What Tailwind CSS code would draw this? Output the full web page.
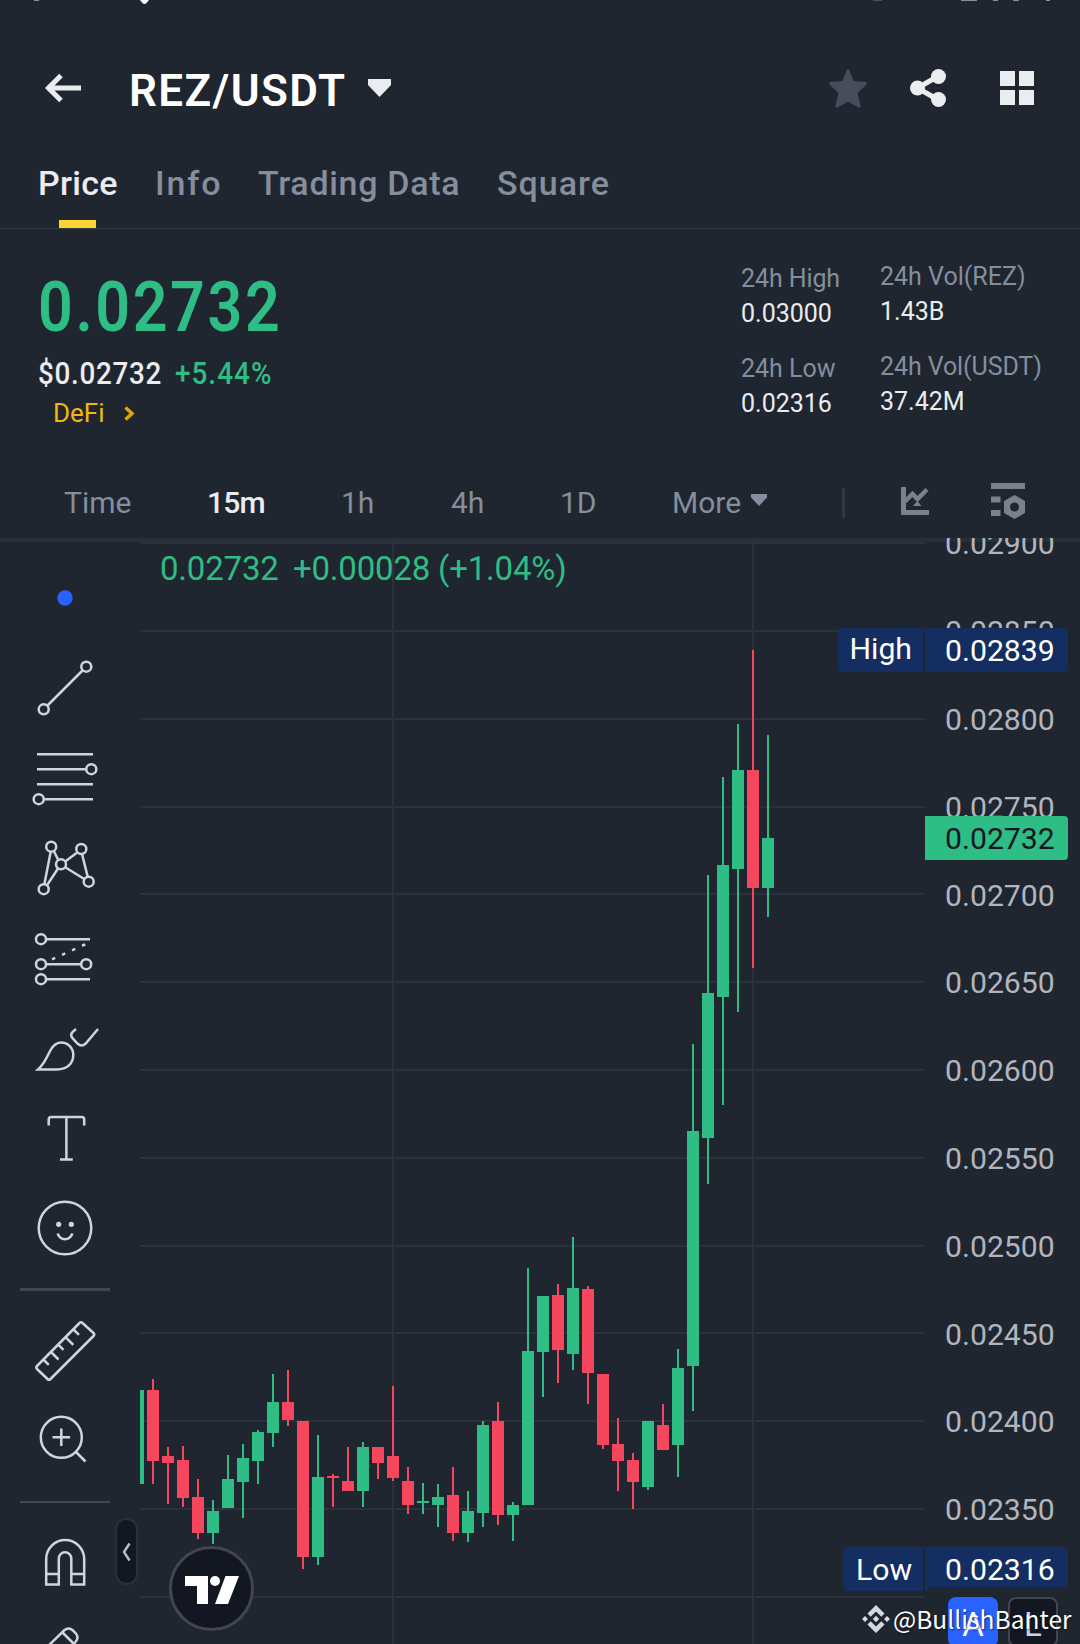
<!DOCTYPE html>
<html lang="en">
<head>
  <meta charset="UTF-8" />
  <meta name="viewport" content="width=device-width, initial-scale=1" />
  <title>REZ/USDT</title>
  <script src="https://cdn.jsdelivr.net/npm/@tailwindcss/browser@4"></script>
</head>
<body class="bg-[#202630] font-['Roboto',sans-serif] text-[#eaecef]">
<div class="relative w-[1080px] h-[1644px] overflow-hidden bg-[#202630]">

  <!-- Status bar remains -->
  <svg class="absolute top-0 left-0" width="1080" height="5" fill="#8b9098">
    <rect x="34" width="5" height="1" />
    <path d="M140 0h9l-2.500 3q-2 2-4 0z" fill="#fff" />
    <rect x="873" width="9" height="1" opacity=".4" />
    <rect x="961" width="16" height="1" />
    <rect x="993" width="5" height="1" />
    <rect x="1013" width="6" height="1" />
    <rect x="1046" width="4" height="1" />
  </svg>

  <!-- Header -->
  <header class="h-[120px] pt-14 pl-11 pr-[46px] flex items-center">
    <svg width="38" height="30" viewBox="0 0 38 30" fill="none" stroke="#eaecef" stroke-width="5">
      <path d="M3 15h34M17 2.500L4.500 15 17 27.500" />
    </svg>
    <h1 class="ml-[47px] pt-1.5 w-[221px] whitespace-nowrap text-[44px] leading-[56px] font-semibold text-white tracking-[1.4px]">REZ/USDT</h1>
    <svg class="ml-[18px]" width="23" height="18" viewBox="0 0 23 18" fill="#eaecef"><path d="M0 0h23v6L11.500 18 0 6z" /></svg>
    <div class="ml-auto flex items-center">
      <svg width="38" height="40" viewBox="0 0 38 40" fill="#474d5c" stroke="#474d5c" stroke-width="3" stroke-linejoin="round">
        <path d="M19 3l4.500 11.500 13 1-9.500 9 3 13.500-11-6-11 6 3-13.500-9.500-9 13-1z" />
      </svg>
      <svg class="ml-[43px]" width="37" height="40" viewBox="0 0 37 40" fill="#eaecef">
        <path d="M7.500 20L28.500 8M7.500 20l21 12" stroke="#eaecef" stroke-width="5" />
        <circle cx="7.500" cy="20" r="7.500" /><circle cx="28.500" cy="8.500" r="7.500" /><circle cx="28.500" cy="31.500" r="7.500" />
      </svg>
      <svg class="ml-[53px]" width="34" height="34" viewBox="0 0 34 34" fill="#eaecef">
        <path d="M0 0h15v15H0zM19 0h15v15H19zM0 19h15v15H0zM19 19h15v15H19z" />
      </svg>
    </div>
  </header>

  <!-- Tabs -->
  <nav class="h-[109px] pl-[38px] flex gap-[37px] border-b border-[#2f3941] text-[34px] leading-[40px] font-medium text-[#848e9c]">
    <a class="relative pt-[43px] w-[80px] tracking-[0.3px] text-[#eaecef]">Price<span class="absolute bottom-0 left-[21px] w-[37px] h-2 bg-[#fcd535]"></span></a>
    <a class="pt-[43px] w-[66px] tracking-[1.9px]">Info</a>
    <a class="pt-[43px] w-[202px] whitespace-nowrap tracking-[0.7px]">Trading Data</a>
    <a class="pt-[43px] tracking-[1px]">Square</a>
  </nav>

  <!-- Price summary -->
  <section class="h-[238px] flex">
    <div class="w-[740px] pt-[38px] pl-[38px]">
      <p class="text-[70px] leading-[80px] font-semibold text-[#2ebd85] tracking-[3px] scale-x-87 origin-left">0.02732</p>
      <p class="mt-1.5 text-[32px] leading-[40px] flex font-medium">
        <span class="w-[137px]"><span class="inline-block scale-x-87 origin-left tracking-[0.8px]">$0.02732</span></span>
        <span class="inline-block scale-x-87 origin-left tracking-[1.200px] text-[#2ebd85]">+5.44%</span>
      </p>
      <p class="pl-[15px] text-[26px] leading-[40px] flex items-center text-[#f0b90b]">
        <span class="w-[71px] tracking-[0px]">DeFi</span>
        <svg width="11" height="15" viewBox="0 0 11 15" fill="none" stroke="#d9a70c" stroke-width="3.500"><path d="M1.500 1.500l6.500 6-6.500 6" /></svg>
      </p>
    </div>
    <div class="w-[139px] pt-[33px] pl-px text-[25px] leading-[34px]">
      <p class="text-[#848e9c] tracking-[-0.1px]">24h High</p>
      <p class="pt-px">0.03000</p>
      <p class="mt-[21px] text-[#848e9c]">24h Low</p>
      <p class="pt-px">0.02316</p>
    </div>
    <div class="pt-[31px] pl-px text-[25px] leading-[34px] whitespace-nowrap">
      <p class="text-[#848e9c]">24h Vol(REZ)</p>
      <p class="pt-px">1.43B</p>
      <p class="mt-[21px] text-[#848e9c] tracking-[-0.1px]">24h Vol(USDT)</p>
      <p class="pt-px">37.42M</p>
    </div>
  </section>

  <!-- Intervals -->
  <section class="h-[71px] pl-16 flex items-center text-[30px] leading-[40px] text-[#848e9c]">
    <span class="w-[143px]">Time</span>
    <span class="w-[134px] font-medium tracking-[-0.8px] text-[#eaecef]">15m</span>
    <span class="w-[110px]">1h</span>
    <span class="w-[109px]">4h</span>
    <span class="w-[112px]">1D</span>
    <span class="w-[79px]">More</span>
    <svg class="-mt-1.5" width="16" height="12" viewBox="0 0 16 12" fill="#848e9c"><path d="M0 0h16v3.500L8 12 0 3.500z" /></svg>
    <span class="ml-[75px] w-[3px] h-[30px] bg-[#2f3942]"></span>
    <svg class="ml-14 -mt-1" width="28" height="28" viewBox="0 0 28 28" fill="none" stroke="#7b818c" stroke-width="5">
      <path d="M2.500 0v25.500H28" />
      <path d="M4 14.500l7.500-7.500 5 5L26 2.500" stroke-width="4.500" />
      <path d="M12 19h8.500l-4.200-5z" fill="#7b818c" stroke="none" />
    </svg>
    <svg class="ml-[62px] -mt-1" width="34" height="36" viewBox="0 0 34 36" fill="#7b818c">
      <path d="M0 0h34v6H0zM0 13.500h9.500v6H0zM0 27h9.500v6H0z" />
      <path fill-rule="evenodd" d="M23.500 12L34 18v12l-10.500 6L13 30V18zM23.500 19.500a4.500 4.500 0 1 0 0 9 4.500 4.500 0 0 0 0-9z" />
    </svg>
  </section>

  <!-- Chart -->
  <section class="relative h-[1106px] flex">

    <!-- Drawing toolbar -->
    <aside class="w-[140px] pl-5 pt-[11px] border-t-4 border-[#292f39] [&>svg]:block [&>svg]:shrink-0 flex flex-col">
      <svg width="90" height="90"><circle cx="45" cy="45" r="7.700" fill="#2962ff" /></svg>
      <svg width="90" height="90" fill="none" stroke="#d1d4dc" stroke-width="2.500">
        <path d="M27.500 62.500l35-35" />
        <circle cx="23.700" cy="66.300" r="5" /><circle cx="66.300" cy="23.700" r="5" />
      </svg>
      <svg width="90" height="90" fill="none" stroke="#d1d4dc" stroke-width="2.500">
        <path d="M17 21.200h56M17 36.200h49M17 51.200h56M24 66.200h49" />
        <circle cx="71.300" cy="36.200" r="5" /><circle cx="18.700" cy="66.200" r="5" />
      </svg>
      <svg width="90" height="90" fill="none" stroke="#d1d4dc" stroke-width="2.500">
        <path d="M30.700 28.700l-6.300 32.300M33.800 28l4.500 9M45.200 38.500l12-9M62 31l5.700 22.700M45.200 44.200l19 11.800M38 45.500L27 62.200" />
        <circle cx="31.200" cy="23.700" r="5" /><circle cx="61.300" cy="26" r="5" /><circle cx="41" cy="41.300" r="5" />
        <circle cx="68.700" cy="58.700" r="5" /><circle cx="23.700" cy="66.200" r="5" />
      </svg>
      <svg width="90" height="90" fill="none" stroke="#d1d4dc" stroke-width="2.500">
        <path d="M26 26.200h44M26 51.200h35M26 66.200h44" />
        <path d="M32 46.300l34-15.300" stroke-dasharray="3.500 7.500" />
        <circle cx="21" cy="26.200" r="5" /><circle cx="21" cy="51.200" r="5" /><circle cx="66.200" cy="51.200" r="5" /><circle cx="21" cy="66.200" r="5" />
      </svg>
      <svg width="90" height="90" fill="none" stroke="#d1d4dc" stroke-width="2.500">
        <path d="M18 66.500C23 62 26.500 55.500 29.500 49c3-6 6.500-9.500 11.500-9.500 7 0 12.300 5.500 12.300 12.500C53.300 60.500 47 66.500 37 66.500z" />
        <path d="M56 26l-3.500 3.200q-2.600 2.800 0 6l5 5.300q4 3.800 8 .3L78 26" />
      </svg>
      <svg width="90" height="90" fill="none" stroke="#d1d4dc" stroke-width="2.500">
        <path d="M28.700 32.500v-6q0-2.500 2.500-2.500h30.500q2.500 0 2.500 2.500v6M46.400 24v42.500M40 66.500h12.800" />
      </svg>
      <svg width="90" height="90" fill="none" stroke="#d1d4dc" stroke-width="2.500">
        <circle cx="45" cy="45" r="26.300" /><path d="M37.500 50.500q2.500 5.700 7.500 5.700t7.500-5.700" />
        <circle cx="38.700" cy="41.300" r="2.600" fill="#d1d4dc" stroke="none" /><circle cx="51.300" cy="41.300" r="2.600" fill="#d1d4dc" stroke="none" />
      </svg>
      <div class="my-[15px] w-[90px] h-[3px] shrink-0 bg-[#434651]"></div>
      <svg width="90" height="90" fill="none" stroke="#d1d4dc" stroke-width="2.500">
        <path d="M17 60L59.500 17q1.500-1.500 3 0L73.500 27q1.500 1.500 0 3L30.500 73q-1.500 1.500-3 0L17 63q-1.500-1.500 0-3z" />
        <path d="M23.300 53.500l5.500 5.300M31 46l7.500 7.500M38.300 38.700l5.200 5.200M45.700 31.300l7.600 7.600M53.500 23.500l5.500 5.300" />
      </svg>
      <svg width="90" height="90" fill="none" stroke="#d1d4dc" stroke-width="2.500">
        <circle cx="41.300" cy="41.300" r="20.500" /><path d="M41.300 32.500v17.600M32.500 41.300h17.600M56 56l9.500 9.500" />
      </svg>
      <div class="my-[15px] w-[90px] h-0.5 shrink-0 bg-[#434651]"></div>
      <svg width="90" height="90" fill="none" stroke="#d1d4dc" stroke-width="2.500">
        <path d="M26.200 66.500V41a19 19 0 0 1 38 0v25.500H51.300V40.500a6.200 6.200 0 0 0-12.500 0v26zM26.200 56h12.600M51.300 56h12.900" />
      </svg>
      <svg width="90" height="90" fill="none" stroke="#d1d4dc" stroke-width="2.500">
        <path d="M20 46l24-23.500q4.500-4 9 0l2.500 2.500q4 4.500 0 9L34 56M42 24l12 12" />
      </svg>
    </aside>

    <!-- Price chart, y coordinates count from the top of the screen -->
    <svg id="chart" class="block" width="940" height="1106" viewBox="140 538 940 1106" font-size="30.200">
      <rect x="140" y="538" width="940" height="4" fill="#292f39" />
      <g id="grid" fill="#2b323c"></g>
      <g id="candles"></g>
      <g id="axis" fill="#b2b5be"></g>
      <g fill="#2ebd85" font-size="33" letter-spacing="-.2">
        <text x="160" y="580">0.02732</text>
        <text x="293" y="580">+0.00028 (+1.04%)</text>
      </g>
      <g fill="#142e61">
        <path d="M842 628h81v44h-81q-4 0-4-4v-36q0-4 4-4zM925 628h139q4 0 4 4v36q0 4-4 4H925z" />
        <path d="M847 1547h76v44h-76q-4 0-4-4v-36q0-4 4-4zM925 1547h139q4 0 4 4v36H928v4h-3z" />
      </g>
      <path d="M925 816h139q4 0 4 4v36q0 4-4 4H925z" fill="#2ebd85" />
      <g fill="#fff">
        <text x="849.500" y="659">High</text>
        <text x="945" y="661">0.02839</text>
        <text x="856" y="1580">Low</text>
        <text x="945" y="1580">0.02316</text>
      </g>
      <text x="945" y="849" fill="#131722">0.02732</text>
    </svg>

    <!-- Toolbar handle -->
    <div class="absolute left-[115px] top-[980px] w-[23px] h-[67px] rounded-full bg-[#131722] border-2 border-[#29303a] flex items-center justify-center">
      <svg width="9" height="20" viewBox="0 0 9 20" fill="none" stroke="#b8bbc4" stroke-width="2.500"><path d="M7.500 1.500L2 10l5.500 8.500" /></svg>
    </div>

    <!-- TradingView badge -->
    <div class="absolute left-[169px] top-[1008px] w-[85px] h-[85px] rounded-full bg-[#131722] border-[3px] border-[#434651]">
      <svg class="absolute left-[13px] top-[27px]" width="54" height="28" viewBox="0 0 54 28" fill="#fff">
        <path d="M0 0h23v28H12V10H0zM40.500 0H54L43 28H30z" /><circle cx="30" cy="5" r="5" />
      </svg>
    </div>

    <!-- Scale buttons -->
    <div class="absolute left-[948px] top-[1059px] w-[50px] h-[50px] rounded-lg bg-[#2962ff] text-white text-[33px] leading-[55px] text-center">A</div>
    <div class="absolute left-[1008px] top-[1059px] w-[50px] h-[50px] rounded-lg bg-[#131722] border-2 border-[#434651] text-[#d1d4dc] text-[33px] leading-[51px] text-center">L</div>

    <!-- Watermark -->
    <div class="absolute left-[862px] top-[1063px] h-9 flex items-center gap-[3px] text-white font-['Noto_Sans_CJK_SC',sans-serif] text-[24.5px] leading-9 [text-shadow:1px_1px_2px_rgba(0,0,0,0.6)]">
      <svg width="28" height="28" viewBox="0 0 28 28" fill="#d5d8e2">
        <path d="M14 0l8.500 8.500-3.200 3.200L14 6.500l-5.300 5.200-3.200-3.200zM14 28l8.500-8.500-3.200-3.200-5.300 5.200-5.300-5.200-3.200 3.200zM3 11l3 3-3 3-3-3zM25 11l3 3-3 3-3-3zM14 10.800l3.200 3.200-3.200 3.200-3.200-3.200z" />
      </svg>
      <span class="tracking-[0.05px]">@BullishBanter</span>
    </div>
  </section>
</div>

<script>
  const up = '#2ebd85';
  const down = '#f6465d';

  // [rising, wick top, wick bottom, body top, body bottom]
  const candles = [
    [0, 1379, 1484, 1390, 1461], [0, 1447, 1504, 1456, 1463], [0, 1446, 1507, 1460, 1498],
    [0, 1479, 1539, 1497, 1533], [1, 1500, 1544, 1511, 1533], [1, 1455, 1508, 1479, 1508],
    [1, 1444, 1518, 1458, 1482], [1, 1430, 1484, 1432, 1461], [1, 1374, 1447, 1402, 1433],
    [0, 1370, 1426, 1402, 1420], [0, 1421, 1569, 1421, 1557], [1, 1435, 1565, 1477, 1557],
    [0, 1474, 1507, 1476, 1478], [0, 1447, 1491, 1481, 1491], [1, 1442, 1507, 1447, 1491],
    [0, 1447, 1479, 1447, 1463], [0, 1386, 1481, 1456, 1478], [0, 1467, 1514, 1481, 1505],
    [1, 1483, 1514, 1501, 1503], [1, 1484, 1527, 1497, 1505], [0, 1467, 1541, 1495, 1533],
    [1, 1491, 1542, 1511, 1533], [1, 1421, 1527, 1425, 1513], [0, 1402, 1525, 1421, 1515],
    [1, 1502, 1541, 1505, 1515], [1, 1268, 1505, 1351, 1505], [1, 1296, 1397, 1296, 1352],
    [0, 1284, 1383, 1295, 1350], [1, 1237, 1370, 1288, 1354], [0, 1286, 1404, 1289, 1373],
    [0, 1374, 1449, 1374, 1445], [0, 1418, 1491, 1444, 1461], [0, 1453, 1509, 1460, 1482],
    [1, 1421, 1490, 1421, 1487], [0, 1404, 1450, 1425, 1450], [1, 1349, 1477, 1368, 1445],
    [1, 1044, 1411, 1131, 1366], [1, 875, 1184, 993, 1138], [1, 777, 1105, 865, 997],
    [1, 724, 1012, 770, 869], [0, 650, 968, 770, 888], [1, 735, 917, 838, 888]
  ];

  // [label, line y, text baseline]
  const levels = [
    ['0.02900', 542, 554], ['0.02850', 630, 642], ['0.02800', 718, 730], ['0.02750', 806, 818],
    ['0.02700', 893, 906], ['0.02650', 981, 993], ['0.02600', 1069, 1081], ['0.02550', 1157, 1169],
    ['0.02500', 1245, 1257], ['0.02450', 1332, 1345], ['0.02400', 1420, 1432], ['0.02350', 1508, 1520],
    ['', 1596, 1608]
  ];

  const rect = (x, y, w, h, fill) => `<rect x="${x}" y="${y}" width="${w}" height="${h}"${fill ? ` fill="${fill}"` : ''}/>`;

  document.getElementById('grid').innerHTML =
    levels.map(([, y]) => rect(140, y, 785, 2)).join('') +
    rect(392, 538, 2, 1106) + rect(752, 538, 2, 1106);

  document.getElementById('axis').innerHTML =
    levels.map(([label, , base]) => `<text x="945" y="${base}">${label}</text>`).join('');

  // the first candle is cut off by the left edge
  document.getElementById('candles').innerHTML = rect(140, 1390, 4, 94, up) +
    candles.map(([rising, high, low, top, bottom], i) => {
      const x = 147 + i * 15;
      const color = rising ? up : down;
      return rect(x + 5, high, 2, low - high, color) + rect(x, top, 12, bottom - top, color);
    }).join('');
</script>
</body>
</html>
